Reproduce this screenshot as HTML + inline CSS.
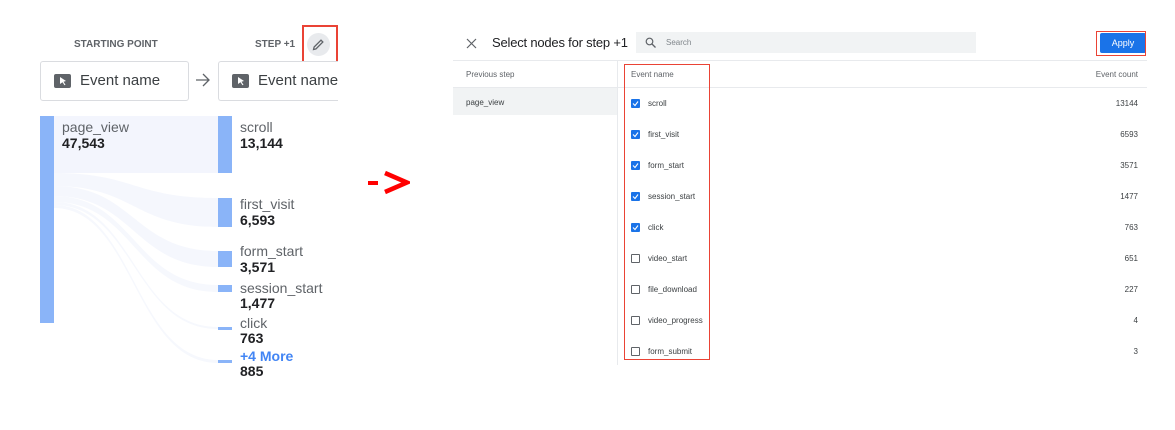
<!DOCTYPE html>
<html><head><meta charset="utf-8"><style>
body{margin:0;width:1175px;height:430px;background:#fff;position:relative;overflow:hidden;font-family:"Liberation Sans",Arial,sans-serif;}
.a{position:absolute;white-space:nowrap;}
.hd{font-size:10px;font-weight:bold;color:#5f6368;}
.box{position:absolute;border:1px solid #dadce0;border-radius:3px;height:38px;top:61px;background:#fff;}
.ic{position:absolute;left:13px;top:12px;width:17px;height:14px;background:#5f6368;border-radius:2px;}
.bt{position:absolute;left:39px;top:10px;font-size:15px;color:#3c4043}
.bar{position:absolute;background:#8ab4f8}
.lb{font-size:14px;color:#5f6368}
.nm{font-size:14px;font-weight:bold;color:#202124}
.r{font-size:8px;color:#3c4043}
.cb{position:absolute;left:631px;width:9px;height:9px;border-radius:1px}
.cb.on{background:#1a73e8}
.cb.off{border:1.3px solid #5f6368;width:7px;height:7px}
.cnt{position:absolute;right:37px;font-size:8px;color:#3c4043}
</style></head><body>
<div class="a hd" style="left:74px;top:39px">STARTING POINT</div>
<div class="a hd" style="left:255px;top:39px">STEP +1</div>
<div class="a" style="left:307px;top:33px;width:23px;height:23px;border-radius:50%;background:#e8eaed"></div>
<svg class="a" style="left:311px;top:37px" width="15" height="15" viewBox="0 0 24 24"><path d="M4 20l1-4L16 5l3 3L8 19z" fill="none" stroke="#5f6368" stroke-width="2"/></svg>
<div class="a" style="left:302px;top:25px;width:32px;height:34px;border:2px solid #ea4335"></div>
<div class="box" style="left:40px;width:147px"><div class="ic"><svg width="17" height="14"><path d="M6 3l6 4-2.5.7 2 3-1 .6-2-3L6 10z" fill="#fff"/></svg></div><div class="bt">Event name</div></div>
<svg class="a" style="left:195px;top:73px" width="16" height="14"><path d="M1 7h13M8 1l6 6-6 6" fill="none" stroke="#5f6368" stroke-width="1.3"/></svg>
<div class="box" style="left:218px;width:125px;border-right:none"><div class="ic"><svg width="17" height="14"><path d="M6 3l6 4-2.5.7 2 3-1 .6-2-3L6 10z" fill="#fff"/></svg></div><div class="bt">Event name</div></div>
<div class="a" style="left:338px;top:55px;width:10px;height:50px;background:#fff"></div>
<svg class="a" style="left:54px;top:116px" width="164" height="250">
<rect x="0" y="0" width="164" height="57" fill="#f3f5fd"/>
<path d="M0 57 C80 57 80 82 164 82 L164 111 C80 111 80 70 0 70Z" fill="#f5f7fd"/>
<path d="M0 70 C80 70 80 135 164 135 L164 151 C80 151 80 80 0 80Z" fill="#f5f7fd"/>
<path d="M0 80 C80 80 80 169 164 169 L164 176 C80 176 80 86 0 86Z" fill="#f6f8fd"/>
<path d="M0 86 C80 86 80 211 164 211 L164 213 C80 213 80 89 0 89Z" fill="#f6f8fd"/>
<path d="M0 89 C80 89 80 244 164 244 L164 247 C80 247 80 92 0 92Z" fill="#f6f8fd"/>
</svg>
<div class="bar" style="left:40px;top:116px;width:14px;height:207px"></div>
<div class="bar" style="left:218px;top:116px;width:14px;height:57px"></div>
<div class="bar" style="left:218px;top:198px;width:14px;height:29px"></div>
<div class="bar" style="left:218px;top:251px;width:14px;height:16px"></div>
<div class="bar" style="left:218px;top:285px;width:14px;height:7px"></div>
<div class="bar" style="left:218px;top:327px;width:14px;height:3px"></div>
<div class="bar" style="left:218px;top:360px;width:14px;height:3px"></div>
<div class="a lb" style="left:62px;top:119px">page_view</div><div class="a nm" style="left:62px;top:135px">47,543</div>
<div class="a lb" style="left:240px;top:119px">scroll</div><div class="a nm" style="left:240px;top:135px">13,144</div>
<div class="a lb" style="left:240px;top:196px">first_visit</div><div class="a nm" style="left:240px;top:212px">6,593</div>
<div class="a lb" style="left:240px;top:243px">form_start</div><div class="a nm" style="left:240px;top:259px">3,571</div>
<div class="a lb" style="left:240px;top:280px">session_start</div><div class="a nm" style="left:240px;top:295px">1,477</div>
<div class="a lb" style="left:240px;top:315px">click</div><div class="a nm" style="left:240px;top:330px">763</div>
<div class="a nm" style="left:240px;top:348px;color:#4285f4">+4 More</div><div class="a nm" style="left:240px;top:363px">885</div>
<div class="a" style="left:368px;top:181px;width:10px;height:4px;background:#f00"></div>
<svg class="a" style="left:383px;top:170px" width="27" height="25"><path d="M2 3L24 12.5L2 22" fill="none" stroke="#f00" stroke-width="4.5"/></svg>

<svg class="a" style="left:466px;top:38px" width="11" height="11"><path d="M1 1L10 10M10 1L1 10" stroke="#5f6368" stroke-width="1.2"/></svg>
<div class="a" style="left:492px;top:35px;font-size:13px;letter-spacing:-0.2px;color:#202124">Select nodes for step +1</div>
<div class="a" style="left:636px;top:32px;width:340px;height:21px;background:#f1f3f4"></div>
<svg class="a" style="left:645px;top:37px" width="11" height="11"><circle cx="4.5" cy="4.5" r="3.3" fill="none" stroke="#5f6368" stroke-width="1.2"/><path d="M7 7L10.5 10.5" stroke="#5f6368" stroke-width="1.3"/></svg>
<div class="a" style="left:666px;top:38px;font-size:8px;color:#80868b">Search</div>
<div class="a" style="left:1100px;top:33px;width:46px;height:20px;background:#1a73e8;border-radius:2px;color:#fff;font-size:9px;text-align:center;line-height:20px">Apply</div>
<div class="a" style="left:1096px;top:31px;width:48px;height:23px;border:1.5px solid #ea4335"></div>
<div class="a" style="left:453px;top:60px;width:694px;height:1px;background:#e8eaed"></div>
<div class="a" style="left:453px;top:87px;width:694px;height:1px;background:#e8eaed"></div>
<div class="a" style="left:617px;top:60px;width:1px;height:305px;background:#e8eaed"></div>
<div class="a" style="left:453px;top:88px;width:164px;height:27px;background:#f1f3f4"></div>
<div class="a r" style="left:466px;top:70px;color:#5f6368">Previous step</div>
<div class="a r" style="left:466px;top:98px">page_view</div>
<div class="a r" style="left:631px;top:70px;color:#5f6368">Event name</div>
<div class="cnt" style="top:70px;color:#5f6368">Event count</div>

<div class="cb on" style="top:99px"></div><div class="a r" style="left:648px;top:99px">scroll</div><div class="cnt" style="top:99px">13144</div>
<div class="cb on" style="top:130px"></div><div class="a r" style="left:648px;top:130px">first_visit</div><div class="cnt" style="top:130px">6593</div>
<div class="cb on" style="top:161px"></div><div class="a r" style="left:648px;top:161px">form_start</div><div class="cnt" style="top:161px">3571</div>
<div class="cb on" style="top:192px"></div><div class="a r" style="left:648px;top:192px">session_start</div><div class="cnt" style="top:192px">1477</div>
<div class="cb on" style="top:223px"></div><div class="a r" style="left:648px;top:223px">click</div><div class="cnt" style="top:223px">763</div>
<div class="cb off" style="top:254px"></div><div class="a r" style="left:648px;top:254px">video_start</div><div class="cnt" style="top:254px">651</div>
<div class="cb off" style="top:285px"></div><div class="a r" style="left:648px;top:285px">file_download</div><div class="cnt" style="top:285px">227</div>
<div class="cb off" style="top:316px"></div><div class="a r" style="left:648px;top:316px">video_progress</div><div class="cnt" style="top:316px">4</div>
<div class="cb off" style="top:347px"></div><div class="a r" style="left:648px;top:347px">form_submit</div><div class="cnt" style="top:347px">3</div>
<svg class="a" style="left:0;top:0;pointer-events:none" width="1175" height="430">
<g fill="none" stroke="#fff" stroke-width="1.1">
<path d="M633 103.5l2 2 3-4"/><path d="M633 134.5l2 2 3-4"/><path d="M633 165.5l2 2 3-4"/><path d="M633 196.5l2 2 3-4"/><path d="M633 227.5l2 2 3-4"/>
</g></svg>
<div class="a" style="left:624px;top:64px;width:84px;height:294px;border:1.5px solid #ea4335"></div>
</body></html>
